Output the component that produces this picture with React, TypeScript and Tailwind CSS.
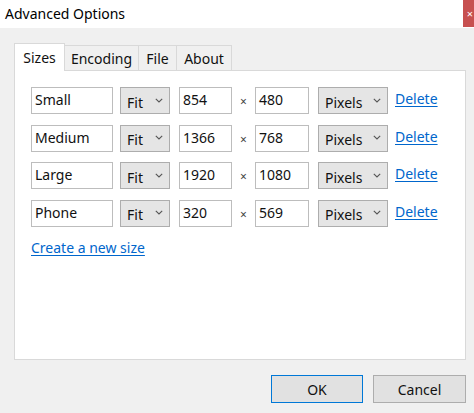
import React from 'react';

const sizes = [
  { name: 'Small', w: '854', h: '480' },
  { name: 'Medium', w: '1366', h: '768' },
  { name: 'Large', w: '1920', h: '1080' },
  { name: 'Phone', w: '320', h: '569' },
];

const Chevron = () => (
  <svg width="8" height="5" viewBox="0 0 8 5" className="shrink-0">
    <polyline points="0.8,0.8 4,4 7.2,0.8" fill="none" stroke="#555" strokeWidth="1.1" />
  </svg>
);

const Field = ({ value, width }: { value: string; width: string }) => (
  <div className={`${width} h-[27px] border border-[#bdbdbd] bg-white px-[3px] pt-[2px] leading-[20px] text-[14px] text-[#111]`}>
    {value}
  </div>
);

const Dropdown = ({ value, width }: { value: string; width: string }) => (
  <div className={`${width} h-[27px] border border-[#adadad] bg-[#e5e5e5] flex items-center justify-between pl-[6px] pr-[6px] pt-[3px] text-[14px] text-[#111]`}>
    <span>{value}</span>
    <span className="pb-[4px]">
      <Chevron />
    </span>
  </div>
);

export default function App() {
  return (
    <div
      className="w-[474px] h-[413px] bg-[#f0f0f0] flex flex-col overflow-hidden"
      style={{ fontFamily: '"Noto Sans", "Open Sans", sans-serif' }}
    >
      {/* Title bar */}
      <div className="h-[28px] bg-white flex items-start justify-between shrink-0">
        <span className="pl-[5px] pt-[3px] text-[14px] text-black">Advanced Options</span>
        <div className="w-[11px] h-[27px] bg-[#c75050] flex items-center justify-end pr-[1px] text-white text-[11px] leading-none">
          ×
        </div>
      </div>

      {/* Tabs */}
      <div className="pl-[14px] pt-[14px] flex flex-col">
        <div className="flex items-end h-[28px] text-[14px] text-[#111]">
          <div className="w-[51px] h-[28px] bg-white border border-b-0 border-[#d9d9d9] flex items-center justify-center relative -mb-px z-10">
            Sizes
          </div>
          <div className="w-[74px] h-[25px] border border-l-0 border-b-0 border-[#d9d9d9] flex items-center justify-center">
            Encoding
          </div>
          <div className="w-[38px] h-[25px] border border-l-0 border-b-0 border-[#d9d9d9] flex items-center justify-center">
            File
          </div>
          <div className="w-[55px] h-[25px] border border-l-0 border-b-0 border-[#d9d9d9] flex items-center justify-center">
            About
          </div>
        </div>

        {/* Panel */}
        <div className="w-[452px] h-[290px] bg-white border border-[#d9d9d9] pl-[16px] pt-[16px] flex flex-col">
          <div className="flex flex-col gap-[10.5px]">
            {sizes.map((s) => (
              <div key={s.name} className="flex items-center h-[27px]">
                <Field value={s.name} width="w-[82px]" />
                <div className="ml-[7px]">
                  <Dropdown value="Fit" width="w-[50px]" />
                </div>
                <div className="ml-[9px]">
                  <Field value={s.w} width="w-[53px]" />
                </div>
                <span className="w-[23px] text-center text-[12px] text-[#444] pt-[3px]">×</span>
                <Field value={s.h} width="w-[54px]" />
                <div className="ml-[9px]">
                  <Dropdown value="Pixels" width="w-[70px]" />
                </div>
                <a className="ml-[7px] self-start pt-[2px] text-[14px] leading-[20px] text-[#0066cc] underline underline-offset-2 cursor-pointer">
                  Delete
                </a>
              </div>
            ))}
          </div>
          <a className="mt-[11px] text-[14px] leading-[20px] text-[#0066cc] underline underline-offset-2 cursor-pointer self-start">
            Create a new size
          </a>
        </div>

        {/* Buttons */}
        <div className="w-[452px] flex justify-end gap-[10px] mt-[15px] text-[14px] text-[#111]">
          <button className="w-[92px] h-[28px] bg-[#e1e1e1] border border-[#0078d7] flex items-center justify-center">
            OK
          </button>
          <button className="w-[93px] h-[28px] bg-[#e1e1e1] border border-[#adadad] flex items-center justify-center">
            Cancel
          </button>
        </div>
      </div>
    </div>
  );
}
